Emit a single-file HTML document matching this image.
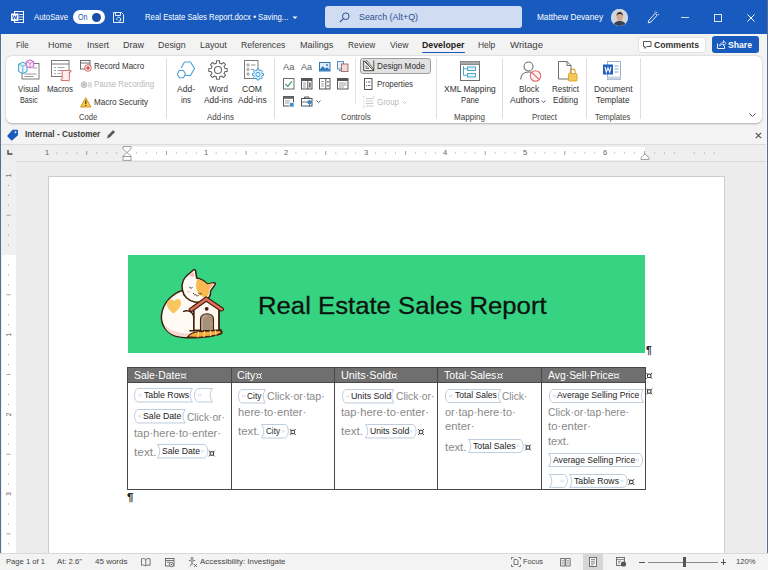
<!DOCTYPE html>
<html><head><meta charset="utf-8">
<style>
*{box-sizing:border-box;margin:0;padding:0}
html,body{width:768px;height:570px;overflow:hidden;background:#ececec;font-family:"Liberation Sans",sans-serif;font-size:9px;color:#222}
.abs{position:absolute}
.tx{position:absolute;white-space:nowrap;transform-origin:0 50%;display:block}
svg{overflow:visible}
</style></head><body>
<div class="abs" style="left:0px;top:33.5px;width:768px;height:111.5px;background:#f3f3f3"></div>
<div class="abs" style="left:0px;top:0px;width:768px;height:33.6px;background:#185abd"></div>
<div class="abs" style="left:6px;top:56px;width:756px;height:67px;background:#fff;border-radius:6px;box-shadow:0 0.5px 2px rgba(0,0,0,.28)"></div>
<div class="abs" style="left:0px;top:144px;width:768px;height:1px;background:#dcdcdc"></div>
<div class="abs" style="left:0px;top:145px;width:768px;height:408px;background:#ececec"></div>
<svg class="abs" style="left:11px;top:11px" width="13" height="12" viewBox="0 0 13 12"><rect x="3.5" y="0.5" width="9" height="11" fill="none" stroke="#fff" stroke-width="1"/>
<path d="M8 3.5h4M8 6h4M8 8.5h4" stroke="#fff" stroke-width="0.8"/>
<rect x="0" y="2.5" width="7.5" height="7.5" fill="#fff"/>
<path d="M1.5 4.2l1 4 1.2-3.4 1.2 3.4 1-4" fill="none" stroke="#185abd" stroke-width="0.9"/></svg>
<span class="tx" style="left:34.00px;top:11.72px;font-size:9px;line-height:10.80px;color:#fff;transform:scaleX(0.8711);">AutoSave</span>
<div class="abs" style="left:73px;top:10px;width:32px;height:14px;background:#fff;border-radius:7px"></div>
<span class="tx" style="left:78.00px;top:12.01px;font-size:8.5px;line-height:10.20px;color:#185abd;transform:scaleX(0.8378);">On</span>
<div class="abs" style="left:92px;top:12.5px;width:9px;height:9.0px;background:#1c4fa3;border-radius:50%"></div>
<svg class="abs" style="left:113px;top:12px" width="11" height="11" viewBox="0 0 11 11"><path d="M0.5 0.5h8l2 2v8h-10z" fill="none" stroke="#fff" stroke-width="0.9"/>
<path d="M2.5 0.5v3h5v-3" fill="none" stroke="#fff" stroke-width="0.9"/>
<path d="M4 8.2a2 2 0 1 1 3 .5M7.5 7v2h-2" fill="none" stroke="#fff" stroke-width="0.8"/></svg>
<span class="tx" style="left:144.70px;top:11.72px;font-size:9px;line-height:10.80px;color:#fff;transform:scaleX(0.8646);">Real Estate Sales Report.docx • Saving...</span>
<svg class="abs" style="left:292px;top:15.5px" width="6" height="4" viewBox="0 0 6 4"><path d="M0.5 0.5l2.5 2.5 2.5-2.5z" fill="#fff"/></svg>
<div class="abs" style="left:325px;top:6px;width:197px;height:22px;background:#d0dcf1;border-radius:3px"></div>
<svg class="abs" style="left:339px;top:11.5px" width="11" height="11" viewBox="0 0 11 11"><circle cx="6.8" cy="4.2" r="3.3" fill="none" stroke="#2a4d8f" stroke-width="1"/><path d="M4.4 6.6L0.8 10.2" stroke="#2a4d8f" stroke-width="1.1"/></svg>
<span class="tx" style="left:359.00px;top:12.02px;font-size:9px;line-height:10.80px;color:#2b4f91;transform:scaleX(0.9871);">Search (Alt+Q)</span>
<span class="tx" style="left:537.00px;top:12.02px;font-size:9px;line-height:10.80px;color:#fff;transform:scaleX(0.9162);">Matthew Devaney</span>
<div class="abs" style="left:610.5px;top:9px;width:17.0px;height:17px;background:#d9dde3;border-radius:50%"></div>
<svg class="abs" style="left:610.5px;top:9px" width="17" height="17" viewBox="0 0 17 17"><defs><clipPath id="av"><circle cx="8.5" cy="8.5" r="8.5"/></clipPath></defs>
<g clip-path="url(#av)"><rect width="17" height="17" fill="#cfd5dd"/>
<ellipse cx="8.7" cy="16.5" rx="6.2" ry="4.6" fill="#39414e"/>
<ellipse cx="8.7" cy="8" rx="3.1" ry="3.9" fill="#d9a58a"/>
<path d="M5.4 7.2c0-3.2 1.6-4.3 3.4-4.3s3.3 1.2 3.2 4.2c-.6-1.6-1.4-2.2-3.3-2.2s-2.8.7-3.3 2.300z" fill="#3a2a22"/></g></svg>
<svg class="abs" style="left:646px;top:11px" width="13" height="13" viewBox="0 0 13 13"><path d="M3 9.200L9.200 2.300l2 1.800L5 11l-2.800 .900z" fill="none" stroke="#fff" stroke-width="0.9"/>
<path d="M8.300 1.300l1.200-1 M11 .800l-.6 1.200 M12 3.500l1.100-.4" stroke="#fff" stroke-width="0.8"/></svg>
<div class="abs" style="left:681px;top:16.5px;width:7.5px;height:1.0px;background:#fff;opacity:.8"></div>
<div class="abs" style="left:714px;top:14px;width:7.5px;height:7.5px;border:1px solid #fff;opacity:.85"></div>
<svg class="abs" style="left:747px;top:14px" width="8" height="8" viewBox="0 0 8 8"><path d="M0.5 0.5l7 7M7.500 0.500l-7 7" stroke="#fff" stroke-width="1"/></svg>
<span class="tx" style="left:16.00px;top:39.43px;font-size:9.5px;line-height:11.40px;color:#3b3b3b;transform:scaleX(0.8296);">File</span>
<span class="tx" style="left:47.70px;top:39.43px;font-size:9.5px;line-height:11.40px;color:#3b3b3b;transform:scaleX(0.9470);">Home</span>
<span class="tx" style="left:86.70px;top:39.43px;font-size:9.5px;line-height:11.40px;color:#3b3b3b;transform:scaleX(0.9259);">Insert</span>
<span class="tx" style="left:123.00px;top:39.43px;font-size:9.5px;line-height:11.40px;color:#3b3b3b;transform:scaleX(0.9473);">Draw</span>
<span class="tx" style="left:158.00px;top:39.43px;font-size:9.5px;line-height:11.40px;color:#3b3b3b;transform:scaleX(0.9367);">Design</span>
<span class="tx" style="left:200.00px;top:39.43px;font-size:9.5px;line-height:11.40px;color:#3b3b3b;transform:scaleX(0.9361);">Layout</span>
<span class="tx" style="left:241.00px;top:39.43px;font-size:9.5px;line-height:11.40px;color:#3b3b3b;transform:scaleX(0.9119);">References</span>
<span class="tx" style="left:299.70px;top:39.43px;font-size:9.5px;line-height:11.40px;color:#3b3b3b;transform:scaleX(0.9556);">Mailings</span>
<span class="tx" style="left:348.00px;top:39.43px;font-size:9.5px;line-height:11.40px;color:#3b3b3b;transform:scaleX(0.8764);">Review</span>
<span class="tx" style="left:389.70px;top:39.43px;font-size:9.5px;line-height:11.40px;color:#3b3b3b;transform:scaleX(0.8962);">View</span>
<span class="tx" style="left:477.70px;top:39.43px;font-size:9.5px;line-height:11.40px;color:#3b3b3b;transform:scaleX(0.8854);">Help</span>
<span class="tx" style="left:510.00px;top:39.43px;font-size:9.5px;line-height:11.40px;color:#3b3b3b;transform:scaleX(1.0135);">Writage</span>
<span class="tx" style="left:422.00px;top:39.43px;font-size:9.5px;line-height:11.40px;color:#222;font-weight:bold;transform:scaleX(0.9252);">Developer</span>
<div class="abs" style="left:422px;top:51.5px;width:43px;height:1.5px;background:#185abd;border-radius:1px"></div>
<div class="abs" style="left:638px;top:37px;width:67.5px;height:15.5px;background:#fff;border:1px solid #e2e2e2;border-radius:3px"></div>
<svg class="abs" style="left:643px;top:41px" width="8.5" height="8" viewBox="0 0 8.5 8"><path d="M0.500 0.500h7.500v5h-4.200l-2 1.900v-1.900h-1.300z" fill="none" stroke="#444" stroke-width="0.9"/></svg>
<span class="tx" style="left:654.00px;top:39.43px;font-size:9.5px;line-height:11.40px;color:#333;font-weight:bold;transform:scaleX(0.9166);">Comments</span>
<div class="abs" style="left:711.5px;top:36px;width:47.5px;height:17px;background:#185abd;border-radius:3px"></div>
<svg class="abs" style="left:716.5px;top:40px" width="9" height="9" viewBox="0 0 9 9"><path d="M0.500 3.500v5h7v-2.500" fill="none" stroke="#fff" stroke-width="0.9"/><path d="M2.500 6c.5-2.500 2-3.500 4-3.500v-2l2.300 2.800-2.300 2.700v-1.800c-1.500 0-2.800.3-4 1.800z" fill="none" stroke="#fff" stroke-width="0.8"/></svg>
<span class="tx" style="left:728.00px;top:39.43px;font-size:9.5px;line-height:11.40px;color:#fff;font-weight:bold;transform:scaleX(0.9090);">Share</span>
<svg class="abs" style="left:17.5px;top:60px" width="22" height="20" viewBox="0 0 22 20"><rect x="4" y="3.500" width="17" height="15.500" fill="#fff" stroke="#7a7a7a" stroke-width="1"/>
<path d="M6.500 14h12M6.500 16.500h9" stroke="#9a9a9a" stroke-width="1"/><path d="M14.500 8h4.500" stroke="#9a9a9a" stroke-width="1"/>
<path d="M0.600 4.200l4.200-2 4.200 2v7.300l-4.200 2-4.200-2z" fill="#eaf6fb" stroke="#3fa0c8" stroke-width="1"/><path d="M0.600 4.200l4.200 2 4.200-2M4.800 6.200v7.300" fill="none" stroke="#3fa0c8" stroke-width="0.800"/>
<path d="M8.300 1.600l3.700-1.800 3.700 1.800v4.600l-3.700 1.800-3.700-1.800z" fill="#fbeafa" stroke="#c75fc2" stroke-width="1"/><path d="M8.300 1.600l3.700 1.800 3.700-1.800M12 3.400v4.600" fill="none" stroke="#c75fc2" stroke-width="0.800"/></svg>
<span class="tx" style="left:18.00px;top:84.15px;font-size:9.3px;line-height:11.16px;color:#333;transform:scaleX(0.8505);">Visual</span>
<span class="tx" style="left:20.00px;top:95.15px;font-size:9.3px;line-height:11.16px;color:#333;transform:scaleX(0.7739);">Basic</span>
<svg class="abs" style="left:50.5px;top:60px" width="21" height="22" viewBox="0 0 21 22"><rect x="0.500" y="0.500" width="17.500" height="16" fill="#fff" stroke="#7a7a7a" stroke-width="1"/><path d="M0.500 4h17.500" stroke="#7a7a7a" stroke-width="1"/>
<path d="M3 7.500h2M6.500 7.500h7M3 10.500h2M6.500 10.500h5M3 13.500h2M6.500 13.500h3" stroke="#a5a5a5" stroke-width="1"/>
<path d="M10.500 10.500h9.500v1.500h-1.700v8.500c0 1-1.200 1-1.200 0h-6.600c-1 0-1-1.500 0-1.500h.700v-8.500z" fill="#fdeeee" stroke="#d9706f" stroke-width="1"/></svg>
<span class="tx" style="left:47.00px;top:84.15px;font-size:9.3px;line-height:11.16px;color:#333;transform:scaleX(0.8528);">Macros</span>
<svg class="abs" style="left:79.5px;top:60px" width="12" height="12" viewBox="0 0 12 12"><rect x="0.500" y="0.500" width="9.500" height="8.500" fill="#fff" stroke="#6e6e6e" stroke-width="1"/><path d="M0.500 3h9.500" stroke="#6e6e6e" stroke-width="1"/>
<circle cx="8" cy="8" r="3.300" fill="#fff" stroke="#c9504f" stroke-width="0.900"/><circle cx="8" cy="8" r="1.700" fill="#d34b4a"/></svg>
<span class="tx" style="left:93.80px;top:60.75px;font-size:9.3px;line-height:11.16px;color:#333;transform:scaleX(0.8595);">Record Macro</span>
<svg class="abs" style="left:79.5px;top:79.5px" width="12" height="10" viewBox="0 0 12 10"><circle cx="4" cy="4.700" r="3" fill="#d9d9d9" stroke="#bdbdbd" stroke-width="0.900"/><circle cx="4" cy="4.700" r="1.300" fill="#b5b5b5"/><path d="M9 2v5.500M11 2v5.500" stroke="#bdbdbd" stroke-width="1"/></svg>
<span class="tx" style="left:93.80px;top:78.75px;font-size:9.3px;line-height:11.16px;color:#b9b9b9;transform:scaleX(0.8410);">Pause Recording</span>
<svg class="abs" style="left:79.5px;top:96.5px" width="11.5" height="10.5" viewBox="0 0 11.5 10.5"><path d="M5.750 0.700l5.200 9.300h-10.400z" fill="#f7c948" stroke="#c58f1c" stroke-width="0.900" stroke-linejoin="round"/><path d="M5.750 3.600v3.300" stroke="#4a3a10" stroke-width="1.200"/><circle cx="5.750" cy="8.400" r="0.700" fill="#4a3a10"/></svg>
<span class="tx" style="left:94.00px;top:96.75px;font-size:9.3px;line-height:11.16px;color:#333;transform:scaleX(0.8707);">Macro Security</span>
<span class="tx" style="left:78.80px;top:112.40px;font-size:8.7px;line-height:10.44px;color:#444;transform:scaleX(0.8750);">Code</span>
<div class="abs" style="left:165.5px;top:58px;width:1.0px;height:61px;background:#dedede"></div>
<svg class="abs" style="left:176px;top:60.5px" width="21" height="20" viewBox="0 0 21 20"><path d="M8.500 1l6-0 4 6.500-4 7h-6l-1.500-2.800" fill="none" stroke="#4d9fd6" stroke-width="1.100" stroke-linejoin="round"/><path d="M8.500 1l-3.300 6" stroke="#4d9fd6" stroke-width="1.100"/>
<path d="M3.300 9.500h4.200l2 3.600-2 3.600h-4.200l-2-3.600z" fill="#fff" stroke="#4d9fd6" stroke-width="1.100" stroke-linejoin="round"/></svg>
<span class="tx" style="left:177.00px;top:84.15px;font-size:9.3px;line-height:11.16px;color:#333;transform:scaleX(0.9162);">Add-</span>
<span class="tx" style="left:181.00px;top:95.15px;font-size:9.3px;line-height:11.16px;color:#333;transform:scaleX(0.8411);">ins</span>
<svg class="abs" style="left:208px;top:60px" width="20" height="20" viewBox="0 0 20 20"><path d="M19.18 8.52 L19.18 11.48 L16.88 11.61 L16.01 13.73 L17.54 15.44 L15.44 17.54 L13.73 16.01 L11.61 16.88 L11.48 19.18 L8.52 19.18 L8.39 16.88 L6.27 16.01 L4.56 17.54 L2.46 15.44 L3.99 13.73 L3.12 11.61 L0.82 11.48 L0.82 8.52 L3.12 8.39 L3.99 6.27 L2.46 4.56 L4.56 2.46 L6.27 3.99 L8.39 3.12 L8.52 0.82 L11.48 0.82 L11.61 3.12 L13.73 3.99 L15.44 2.46 L17.54 4.56 L16.01 6.27 L16.88 8.39z" fill="none" stroke="#6a6a6a" stroke-width="1.1" stroke-linejoin="round"/><circle cx="10" cy="10" r="3.53" fill="none" stroke="#6a6a6a" stroke-width="1.1"/></svg>
<span class="tx" style="left:209.00px;top:84.15px;font-size:9.3px;line-height:11.16px;color:#333;transform:scaleX(0.8616);">Word</span>
<span class="tx" style="left:204.00px;top:95.15px;font-size:9.3px;line-height:11.16px;color:#333;transform:scaleX(0.9069);">Add-ins</span>
<svg class="abs" style="left:244px;top:60px" width="20" height="21" viewBox="0 0 20 21"><rect x="0.500" y="0.500" width="13.500" height="18" fill="#fff" stroke="#7a7a7a" stroke-width="1"/>
<path d="M3 4h2v2h-2zM3 8.500h2v2h-2zM3 13h2v2h-2z" fill="none" stroke="#8a8a8a" stroke-width="0.800"/><path d="M7 5h4.500M7 9.500h3" stroke="#8a8a8a" stroke-width="0.900"/><path d="M19.53 13.61 L19.53 15.39 L18.14 15.47 L17.62 16.74 L18.54 17.78 L17.28 19.04 L16.24 18.12 L14.97 18.64 L14.89 20.03 L13.11 20.03 L13.03 18.64 L11.76 18.12 L10.72 19.04 L9.46 17.78 L10.38 16.74 L9.86 15.47 L8.47 15.39 L8.47 13.61 L9.86 13.53 L10.38 12.26 L9.46 11.22 L10.72 9.96 L11.76 10.88 L13.03 10.36 L13.11 8.97 L14.89 8.97 L14.97 10.36 L16.24 10.88 L17.28 9.96 L18.54 11.22 L17.62 12.26 L18.14 13.53z" fill="#eaf5fc" stroke="#3f9bd8" stroke-width="1" stroke-linejoin="round"/><circle cx="14" cy="14.5" r="2.13" fill="#eaf5fc" stroke="#3f9bd8" stroke-width="1"/></svg>
<span class="tx" style="left:242.00px;top:84.15px;font-size:9.3px;line-height:11.16px;color:#333;transform:scaleX(0.9218);">COM</span>
<span class="tx" style="left:238.00px;top:95.15px;font-size:9.3px;line-height:11.16px;color:#333;transform:scaleX(0.9101);">Add-ins</span>
<span class="tx" style="left:206.50px;top:112.40px;font-size:8.7px;line-height:10.44px;color:#444;transform:scaleX(0.9153);">Add-ins</span>
<div class="abs" style="left:274px;top:58px;width:1px;height:61px;background:#dedede"></div>
<span class="tx" style="left:283.00px;top:60.67px;font-size:9.6px;line-height:11.52px;color:#5c5c5c;transform:scaleX(0.9708);">Aa</span>
<span class="tx" style="left:301.00px;top:60.67px;font-size:9.6px;line-height:11.52px;color:#5c5c5c;transform:scaleX(0.9367);">Aa</span>
<svg class="abs" style="left:319px;top:62px" width="11.5" height="9.5" viewBox="0 0 11.5 9.5"><rect x="0.500" y="0.500" width="10.500" height="8.500" fill="#dcecf9" stroke="#2f78b7" stroke-width="1"/><path d="M0.800 7.500l3-3.200 2.500 2.500 1.700-1.500 2.700 2.400v1h-9.900z" fill="#2f78b7"/><circle cx="8" cy="3" r="0.900" fill="#2f78b7"/></svg>
<svg class="abs" style="left:337px;top:61px" width="11.5" height="11" viewBox="0 0 11.5 11"><rect x="0.500" y="0.500" width="6" height="7.500" fill="#e8f0f8" stroke="#4f86b8" stroke-width="0.900"/><rect x="4.500" y="3" width="6.500" height="7.500" fill="#f5d9d4" stroke="#9a6b66" stroke-width="0.900"/><path d="M2 9.500h2M3 8.500v2" stroke="#4f86b8" stroke-width="0.800"/></svg>
<svg class="abs" style="left:283px;top:78px" width="11.5" height="11.5" viewBox="0 0 11.5 11.5"><rect x="0.500" y="0.500" width="10.500" height="10.500" fill="#fff" stroke="#6b6b6b" stroke-width="1"/><path d="M2.500 6l2.300 2.300 4.200-5" fill="none" stroke="#3d9a63" stroke-width="1.200"/></svg>
<svg class="abs" style="left:301px;top:78px" width="11.5" height="11.5" viewBox="0 0 11.5 11.5"><rect x="0.500" y="0.500" width="10.500" height="10.500" fill="#fff" stroke="#555" stroke-width="1"/><rect x="0.500" y="0.500" width="10.500" height="2.500" fill="#555"/><path d="M6.800 3v8" stroke="#555" stroke-width="1"/><path d="M2 5h3M2 7h3M2 9h3" stroke="#888" stroke-width="0.800"/><rect x="8" y="4.500" width="1.800" height="5" fill="#777"/></svg>
<svg class="abs" style="left:319px;top:78px" width="11.5" height="11.5" viewBox="0 0 11.5 11.5"><rect x="0.500" y="0.500" width="10.500" height="10.500" fill="#fff" stroke="#555" stroke-width="1"/><path d="M6.800 0.500v10.500" stroke="#555" stroke-width="1"/><path d="M2 3.500h3M2 5.800h3M2 8h3" stroke="#888" stroke-width="0.800"/><rect x="8.200" y="3" width="1.500" height="1.500" fill="#666"/><rect x="8.200" y="7" width="1.500" height="1.500" fill="#666"/></svg>
<svg class="abs" style="left:337px;top:78px" width="11.5" height="11.5" viewBox="0 0 11.5 11.5"><rect x="0.500" y="0.500" width="10.500" height="10.500" fill="#fff" stroke="#555" stroke-width="1"/><rect x="0.500" y="0.500" width="10.500" height="2.500" fill="#555"/><path d="M2 5h7.500M2 7h7.500M2 9h5" stroke="#888" stroke-width="0.800"/></svg>
<svg class="abs" style="left:283px;top:96px" width="11.5" height="11.5" viewBox="0 0 11.5 11.5"><rect x="0.500" y="0.500" width="10" height="9.500" fill="#fff" stroke="#555" stroke-width="1"/><rect x="0.500" y="0.500" width="10" height="2.300" fill="#666"/><path d="M2 5h5M2 7h4" stroke="#888" stroke-width="0.800"/><rect x="6.500" y="6.500" width="4.500" height="4.500" fill="#3a8fd0" stroke="#fff" stroke-width="0.600"/></svg>
<svg class="abs" style="left:301px;top:96px" width="11.5" height="11.5" viewBox="0 0 11.5 11.5"><rect x="0.500" y="2.500" width="10.500" height="7.500" fill="#fff" stroke="#555" stroke-width="1"/><path d="M3.500 2.500v-1.500h4.500v1.500" fill="none" stroke="#555" stroke-width="1"/><path d="M0.500 6h10.500" stroke="#555" stroke-width="0.800"/><path d="M8.500 4.500a1.700 1.700 0 1 0 .010 0zM8.500 7.500v3.500" fill="#3a8fd0" stroke="#2e7fc0" stroke-width="1"/></svg>
<svg class="abs" style="left:316px;top:100px" width="5" height="3.5" viewBox="0 0 5 3.5"><path d="M0.500 0.500l2 2 2-2" fill="none" stroke="#555" stroke-width="0.900"/></svg>
<div class="abs" style="left:355px;top:58px;width:1px;height:46px;background:#e3e3e3"></div>
<div class="abs" style="left:360px;top:58px;width:71px;height:15.5px;background:#e2e2e2;border:1px solid #9d9d9d;border-radius:3px"></div>
<svg class="abs" style="left:362.5px;top:60px" width="11.5" height="11.5" viewBox="0 0 11.5 11.5"><path d="M0.700 0.700v10h10z" fill="#fff" stroke="#444" stroke-width="1" stroke-linejoin="round"/><path d="M3 5.500v3h3z" fill="none" stroke="#444" stroke-width="0.700"/><path d="M2.500 1.300l6.800 8.300 1.300.7-.2-1.500-6.700-8.300z" fill="#fff" stroke="#444" stroke-width="0.800"/><path d="M10.800 0.500v10" stroke="#444" stroke-width="0.900"/></svg>
<span class="tx" style="left:377.00px;top:60.75px;font-size:9.3px;line-height:11.16px;color:#2d2d2d;transform:scaleX(0.8759);">Design Mode</span>
<svg class="abs" style="left:364px;top:78px" width="8.5" height="12" viewBox="0 0 8.5 12"><rect x="0.500" y="0.500" width="7.500" height="11" fill="#fff" stroke="#555" stroke-width="1"/><path d="M2 4h1M4 4h2.500M2 7.500h1M4 7.500h2.500" stroke="#666" stroke-width="0.900"/></svg>
<span class="tx" style="left:377.00px;top:78.95px;font-size:9.3px;line-height:11.16px;color:#333;transform:scaleX(0.8493);">Properties</span>
<svg class="abs" style="left:362.5px;top:96px" width="11.5" height="12" viewBox="0 0 11.5 12"><path d="M3 2.500h7.500M3 5h7.500M3 7.500h7.500M3 10h7.500" stroke="#c4c4c4" stroke-width="0.900"/><path d="M0.500 0.500h1M0.500 0.500v1M0.500 11.500h1M0.500 11.500v-1M10 0.500h1M11 0.500v1" stroke="#c4c4c4" stroke-width="0.800"/><path d="M1 3v7" stroke="#d0d0d0" stroke-width="0.800" stroke-dasharray="1 1"/></svg>
<span class="tx" style="left:377.00px;top:96.75px;font-size:9.3px;line-height:11.16px;color:#b9b9b9;transform:scaleX(0.8511);">Group</span>
<svg class="abs" style="left:401.5px;top:100.5px" width="5" height="3.5" viewBox="0 0 5 3.5"><path d="M0.500 0.500l2 2 2-2" fill="none" stroke="#c0c0c0" stroke-width="0.900"/></svg>
<span class="tx" style="left:341.00px;top:112.40px;font-size:8.7px;line-height:10.44px;color:#444;transform:scaleX(0.9168);">Controls</span>
<div class="abs" style="left:436px;top:58px;width:1px;height:61px;background:#dedede"></div>
<svg class="abs" style="left:460px;top:60.5px" width="20" height="20" viewBox="0 0 20 20"><rect x="0.500" y="0.500" width="19" height="19" fill="#fff" stroke="#6e6e6e" stroke-width="1"/><path d="M0.500 3.500h19" stroke="#6e6e6e" stroke-width="1"/><rect x="0.500" y="0.500" width="19" height="3" fill="#a8a8a8"/>
<rect x="7.500" y="6" width="8" height="3.500" fill="#e3f3fa" stroke="#3c9fcb" stroke-width="0.900"/><rect x="7.500" y="12.500" width="8" height="3.500" fill="#e3f3fa" stroke="#3c9fcb" stroke-width="0.900"/><path d="M3.500 5v9.300h4M3.500 7.800h4" fill="none" stroke="#3c9fcb" stroke-width="0.900"/></svg>
<span class="tx" style="left:443.70px;top:84.35px;font-size:9.3px;line-height:11.16px;color:#333;transform:scaleX(0.9082);">XML Mapping</span>
<span class="tx" style="left:461.00px;top:95.35px;font-size:9.3px;line-height:11.16px;color:#333;transform:scaleX(0.8287);">Pane</span>
<span class="tx" style="left:454.00px;top:112.40px;font-size:8.7px;line-height:10.44px;color:#444;transform:scaleX(0.9289);">Mapping</span>
<div class="abs" style="left:502px;top:58px;width:1px;height:61px;background:#dedede"></div>
<svg class="abs" style="left:519.5px;top:60.5px" width="22" height="21.5" viewBox="0 0 22 21.5"><circle cx="8.500" cy="5.500" r="4.500" fill="#fff" stroke="#6e6e6e" stroke-width="1.100"/><path d="M0.700 18.500c0-5 3.500-7.500 7.800-7.500 2 0 3.500.5 4.500 1.300" fill="none" stroke="#6e6e6e" stroke-width="1.100"/>
<circle cx="15.500" cy="15" r="5.300" fill="#fdf1f1" stroke="#dc6b6b" stroke-width="1.100"/><path d="M11.800 11.300l7.400 7.400" stroke="#dc6b6b" stroke-width="1.100"/></svg>
<span class="tx" style="left:518.50px;top:84.35px;font-size:9.3px;line-height:11.16px;color:#333;transform:scaleX(0.8794);">Block</span>
<span class="tx" style="left:510.00px;top:95.35px;font-size:9.3px;line-height:11.16px;color:#333;transform:scaleX(0.9204);">Authors</span>
<svg class="abs" style="left:541px;top:99.5px" width="5" height="3.5" viewBox="0 0 5 3.5"><path d="M0.500 0.500l2 2 2-2" fill="none" stroke="#555" stroke-width="0.900"/></svg>
<svg class="abs" style="left:558px;top:60.5px" width="20" height="21.5" viewBox="0 0 20 21.5"><path d="M0.500 0.500h8.500l4 4v13.500h-12.500z" fill="#fff" stroke="#6e6e6e" stroke-width="1" stroke-linejoin="round"/><path d="M9 0.500v4h4" fill="none" stroke="#6e6e6e" stroke-width="1"/>
<rect x="10.500" y="12.500" width="8.500" height="7.500" rx="0.800" fill="#f6c85a" stroke="#d7a12b" stroke-width="0.900"/><path d="M12.300 12.500v-2a2.400 2.400 0 0 1 4.800 0v2" fill="none" stroke="#d7a12b" stroke-width="1.100"/></svg>
<span class="tx" style="left:551.70px;top:84.35px;font-size:9.3px;line-height:11.16px;color:#333;transform:scaleX(0.8566);">Restrict</span>
<span class="tx" style="left:553.00px;top:95.35px;font-size:9.3px;line-height:11.16px;color:#333;transform:scaleX(0.8791);">Editing</span>
<span class="tx" style="left:532.00px;top:112.40px;font-size:8.7px;line-height:10.44px;color:#444;transform:scaleX(0.9070);">Protect</span>
<div class="abs" style="left:585.5px;top:58px;width:1.0px;height:61px;background:#dedede"></div>
<svg class="abs" style="left:602.5px;top:61px" width="18.5" height="19.5" viewBox="0 0 18.5 19.5"><rect x="4.500" y="0.500" width="13" height="18" fill="#fff" stroke="#9ab0cf" stroke-width="1"/><rect x="4.500" y="15.500" width="13" height="3" fill="#c9d3e2"/><path d="M11.500 5h4M11.500 8h4M11.500 11h4" stroke="#8aa5cc" stroke-width="1"/>
<rect x="0" y="3.500" width="10" height="10" fill="#1f5fbf"/><path d="M2 5.800l1.300 5.400 1.700-4.400 1.700 4.400 1.300-5.400" fill="none" stroke="#fff" stroke-width="1.100"/></svg>
<span class="tx" style="left:593.50px;top:84.15px;font-size:9.3px;line-height:11.16px;color:#333;transform:scaleX(0.9083);">Document</span>
<span class="tx" style="left:596.00px;top:95.15px;font-size:9.3px;line-height:11.16px;color:#333;transform:scaleX(0.8877);">Template</span>
<span class="tx" style="left:595.00px;top:112.20px;font-size:8.7px;line-height:10.44px;color:#444;transform:scaleX(0.8928);">Templates</span>
<div class="abs" style="left:639.5px;top:58px;width:1.0px;height:61px;background:#dedede"></div>
<svg class="abs" style="left:748.5px;top:112.5px" width="7" height="4.5" viewBox="0 0 7 4.5"><path d="M0.500 0.500l3 3 3-3" fill="none" stroke="#555" stroke-width="1"/></svg>
<svg class="abs" style="left:7px;top:128.5px" width="11.5" height="11.5" viewBox="0 0 11.5 11.5"><path d="M5.500 0.700h4.800a.7.700 0 0 1 .7.700v4.800l-5.700 5a.8.800 0 0 1-1.100 0l-3.700-3.700a.8.800 0 0 1 0-1.100z" fill="#185abd"/><circle cx="8.500" cy="3.200" r="1" fill="#f3f3f3"/></svg>
<span class="tx" style="left:24.70px;top:129.34px;font-size:8.8px;line-height:10.56px;color:#3a3a3a;font-weight:bold;transform:scaleX(0.9333);">Internal - Customer</span>
<svg class="abs" style="left:107px;top:130px" width="8" height="8.5" viewBox="0 0 8 8.5"><path d="M0.500 8l.6-2.500 5-5 1.600 1.600-5 5zM5.300 1.300l1.600 1.600" fill="#555" stroke="#555" stroke-width="0.600"/></svg>
<svg class="abs" style="left:755px;top:131.5px" width="7" height="7" viewBox="0 0 7 7"><path d="M0.800 0.800l5.400 5.400M6.200 0.800l-5.400 5.400" stroke="#555" stroke-width="1.200"/></svg>
<div class="abs" style="left:0px;top:145px;width:768px;height:16px;background:#eeeeee"></div>
<div class="abs" style="left:17px;top:146.5px;width:701px;height:13.5px;background:#efefef"></div>
<div class="abs" style="left:127px;top:146.5px;width:518px;height:13.5px;background:#fff"></div>
<div class="abs" style="left:0px;top:160.5px;width:768px;height:0.8000000000000114px;background:#dadada"></div>
<svg class="abs" style="left:6.5px;top:150px" width="6" height="5" viewBox="0 0 6 5"><path d="M1 0v4h4.500" fill="none" stroke="#444" stroke-width="1.300"/></svg>
<span class="tx" style="left:44.92px;top:149.39px;font-size:6.5px;line-height:7.80px;color:#666;transform:scaleX(1.1618);">1</span>
<span class="tx" style="left:204.28px;top:149.39px;font-size:6.5px;line-height:7.80px;color:#666;transform:scaleX(1.1618);">1</span>
<span class="tx" style="left:283.96px;top:149.39px;font-size:6.5px;line-height:7.80px;color:#666;transform:scaleX(1.1618);">2</span>
<span class="tx" style="left:363.64px;top:149.39px;font-size:6.5px;line-height:7.80px;color:#666;transform:scaleX(1.1618);">3</span>
<span class="tx" style="left:443.32px;top:149.39px;font-size:6.5px;line-height:7.80px;color:#666;transform:scaleX(1.1618);">4</span>
<span class="tx" style="left:523.00px;top:149.39px;font-size:6.5px;line-height:7.80px;color:#666;transform:scaleX(1.1618);">5</span>
<span class="tx" style="left:602.68px;top:149.39px;font-size:6.5px;line-height:7.80px;color:#666;transform:scaleX(1.1618);">6</span>
<svg class="abs" style="left:0px;top:0px" width="768" height="170" viewBox="0 0 768 170"><rect x="56.4" y="152.500" width="1" height="1" fill="#9a9a9a"/><rect x="66.3" y="152.500" width="1" height="1" fill="#9a9a9a"/><rect x="76.3" y="152.500" width="1" height="1" fill="#9a9a9a"/><rect x="86.4" y="151" width="0.800" height="4" fill="#8c8c8c"/><rect x="96.2" y="152.500" width="1" height="1" fill="#9a9a9a"/><rect x="106.2" y="152.500" width="1" height="1" fill="#9a9a9a"/><rect x="116.1" y="152.500" width="1" height="1" fill="#9a9a9a"/><rect x="136.1" y="152.500" width="1" height="1" fill="#9a9a9a"/><rect x="146.0" y="152.500" width="1" height="1" fill="#9a9a9a"/><rect x="156.0" y="152.500" width="1" height="1" fill="#9a9a9a"/><rect x="166.0" y="151" width="0.800" height="4" fill="#8c8c8c"/><rect x="175.9" y="152.500" width="1" height="1" fill="#9a9a9a"/><rect x="185.9" y="152.500" width="1" height="1" fill="#9a9a9a"/><rect x="195.8" y="152.500" width="1" height="1" fill="#9a9a9a"/><rect x="215.7" y="152.500" width="1" height="1" fill="#9a9a9a"/><rect x="225.7" y="152.500" width="1" height="1" fill="#9a9a9a"/><rect x="235.7" y="152.500" width="1" height="1" fill="#9a9a9a"/><rect x="245.7" y="151" width="0.800" height="4" fill="#8c8c8c"/><rect x="255.6" y="152.500" width="1" height="1" fill="#9a9a9a"/><rect x="265.5" y="152.500" width="1" height="1" fill="#9a9a9a"/><rect x="275.5" y="152.500" width="1" height="1" fill="#9a9a9a"/><rect x="295.4" y="152.500" width="1" height="1" fill="#9a9a9a"/><rect x="305.4" y="152.500" width="1" height="1" fill="#9a9a9a"/><rect x="315.3" y="152.500" width="1" height="1" fill="#9a9a9a"/><rect x="325.4" y="151" width="0.800" height="4" fill="#8c8c8c"/><rect x="335.3" y="152.500" width="1" height="1" fill="#9a9a9a"/><rect x="345.2" y="152.500" width="1" height="1" fill="#9a9a9a"/><rect x="355.2" y="152.500" width="1" height="1" fill="#9a9a9a"/><rect x="375.1" y="152.500" width="1" height="1" fill="#9a9a9a"/><rect x="385.1" y="152.500" width="1" height="1" fill="#9a9a9a"/><rect x="395.0" y="152.500" width="1" height="1" fill="#9a9a9a"/><rect x="405.1" y="151" width="0.800" height="4" fill="#8c8c8c"/><rect x="414.9" y="152.500" width="1" height="1" fill="#9a9a9a"/><rect x="424.9" y="152.500" width="1" height="1" fill="#9a9a9a"/><rect x="434.9" y="152.500" width="1" height="1" fill="#9a9a9a"/><rect x="454.8" y="152.500" width="1" height="1" fill="#9a9a9a"/><rect x="464.7" y="152.500" width="1" height="1" fill="#9a9a9a"/><rect x="474.7" y="152.500" width="1" height="1" fill="#9a9a9a"/><rect x="484.8" y="151" width="0.800" height="4" fill="#8c8c8c"/><rect x="494.6" y="152.500" width="1" height="1" fill="#9a9a9a"/><rect x="504.6" y="152.500" width="1" height="1" fill="#9a9a9a"/><rect x="514.5" y="152.500" width="1" height="1" fill="#9a9a9a"/><rect x="534.5" y="152.500" width="1" height="1" fill="#9a9a9a"/><rect x="544.4" y="152.500" width="1" height="1" fill="#9a9a9a"/><rect x="554.4" y="152.500" width="1" height="1" fill="#9a9a9a"/><rect x="564.4" y="151" width="0.800" height="4" fill="#8c8c8c"/><rect x="574.3" y="152.500" width="1" height="1" fill="#9a9a9a"/><rect x="584.3" y="152.500" width="1" height="1" fill="#9a9a9a"/><rect x="594.2" y="152.500" width="1" height="1" fill="#9a9a9a"/><rect x="614.1" y="152.500" width="1" height="1" fill="#9a9a9a"/><rect x="624.1" y="152.500" width="1" height="1" fill="#9a9a9a"/><rect x="634.1" y="152.500" width="1" height="1" fill="#9a9a9a"/><rect x="644.1" y="151" width="0.800" height="4" fill="#8c8c8c"/><rect x="654.0" y="152.500" width="1" height="1" fill="#9a9a9a"/><rect x="663.9" y="152.500" width="1" height="1" fill="#9a9a9a"/><rect x="673.9" y="152.500" width="1" height="1" fill="#9a9a9a"/><rect x="693.8" y="152.500" width="1" height="1" fill="#9a9a9a"/><rect x="703.8" y="152.500" width="1" height="1" fill="#9a9a9a"/><rect x="713.7" y="152.500" width="1" height="1" fill="#9a9a9a"/></svg>
<svg class="abs" style="left:122px;top:146px" width="10" height="15" viewBox="0 0 10 15"><path d="M1 0.500h8v2.500l-4 3.500-4-3.500z" fill="#fff" stroke="#8a8a8a" stroke-width="0.800"/><path d="M1 10l4-3.500 4 3.500v0.500h-8z" fill="#fff" stroke="#8a8a8a" stroke-width="0.800"/><rect x="1" y="10.500" width="8" height="3.800" fill="#fff" stroke="#8a8a8a" stroke-width="0.800"/></svg>
<svg class="abs" style="left:640px;top:153px" width="10" height="7" viewBox="0 0 10 7"><path d="M1 6.500v-2l4-3.500 4 3.500v2z" fill="#fff" stroke="#8a8a8a" stroke-width="0.800"/></svg>
<div class="abs" style="left:2px;top:161px;width:13.5px;height:392px;background:#f0f0f0"></div>
<div class="abs" style="left:2px;top:255px;width:13.5px;height:298px;background:#fff"></div>
<svg class="abs" style="left:0px;top:0px" width="20" height="570" viewBox="0 0 20 570"><text x="8.700" y="177.51999999999998" font-size="6.500" fill="#555" text-anchor="middle" font-family="Liberation Sans" transform="rotate(-90 8.700 175.32)">1</text><rect x="8" y="184.8" width="1" height="1" fill="#9a9a9a"/><rect x="8" y="194.7" width="1" height="1" fill="#9a9a9a"/><rect x="8" y="204.7" width="1" height="1" fill="#9a9a9a"/><rect x="6.500" y="214.8" width="4" height="0.800" fill="#8c8c8c"/><rect x="8" y="224.6" width="1" height="1" fill="#9a9a9a"/><rect x="8" y="234.6" width="1" height="1" fill="#9a9a9a"/><rect x="8" y="244.5" width="1" height="1" fill="#9a9a9a"/><rect x="8" y="264.5" width="1" height="1" fill="#9a9a9a"/><rect x="8" y="274.4" width="1" height="1" fill="#9a9a9a"/><rect x="8" y="284.4" width="1" height="1" fill="#9a9a9a"/><rect x="6.500" y="294.4" width="4" height="0.800" fill="#8c8c8c"/><rect x="8" y="304.3" width="1" height="1" fill="#9a9a9a"/><rect x="8" y="314.3" width="1" height="1" fill="#9a9a9a"/><rect x="8" y="324.2" width="1" height="1" fill="#9a9a9a"/><text x="8.700" y="336.88" font-size="6.500" fill="#555" text-anchor="middle" font-family="Liberation Sans" transform="rotate(-90 8.700 334.68)">1</text><rect x="8" y="344.1" width="1" height="1" fill="#9a9a9a"/><rect x="8" y="354.1" width="1" height="1" fill="#9a9a9a"/><rect x="8" y="364.1" width="1" height="1" fill="#9a9a9a"/><rect x="6.500" y="374.1" width="4" height="0.800" fill="#8c8c8c"/><rect x="8" y="384.0" width="1" height="1" fill="#9a9a9a"/><rect x="8" y="393.9" width="1" height="1" fill="#9a9a9a"/><rect x="8" y="403.9" width="1" height="1" fill="#9a9a9a"/><text x="8.700" y="416.56" font-size="6.500" fill="#555" text-anchor="middle" font-family="Liberation Sans" transform="rotate(-90 8.700 414.36)">2</text><rect x="8" y="423.8" width="1" height="1" fill="#9a9a9a"/><rect x="8" y="433.8" width="1" height="1" fill="#9a9a9a"/><rect x="8" y="443.7" width="1" height="1" fill="#9a9a9a"/><rect x="6.500" y="453.8" width="4" height="0.800" fill="#8c8c8c"/><rect x="8" y="463.7" width="1" height="1" fill="#9a9a9a"/><rect x="8" y="473.6" width="1" height="1" fill="#9a9a9a"/><rect x="8" y="483.6" width="1" height="1" fill="#9a9a9a"/><text x="8.700" y="496.24" font-size="6.500" fill="#555" text-anchor="middle" font-family="Liberation Sans" transform="rotate(-90 8.700 494.04)">3</text><rect x="8" y="503.5" width="1" height="1" fill="#9a9a9a"/><rect x="8" y="513.5" width="1" height="1" fill="#9a9a9a"/><rect x="8" y="523.4" width="1" height="1" fill="#9a9a9a"/><rect x="6.500" y="533.5" width="4" height="0.800" fill="#8c8c8c"/><rect x="8" y="543.3" width="1" height="1" fill="#9a9a9a"/></svg>
<div class="abs" style="left:0px;top:34px;width:1px;height:536px;background:#5a6e8f"></div>
<div class="abs" style="left:766px;top:34px;width:1px;height:536px;background:#f4f7fb"></div>
<div class="abs" style="left:767px;top:0px;width:1px;height:570px;background:#5c6d8a"></div>
<div class="abs" style="left:48px;top:175.5px;width:676.8px;height:377.5px;background:#fff;border:1px solid #cdcdcd;border-bottom:none"></div>
<div class="abs" style="left:127.5px;top:255px;width:517.5px;height:97.5px;background:#36d383"></div>
<span class="tx" style="left:258.00px;top:291.47px;font-size:24.6px;line-height:29.52px;color:#0c130f;transform:scaleX(1.0452);-webkit-text-stroke:0.3px #0c130f;">Real Estate Sales Report</span>
<span class="tx" style="left:646.30px;top:345.13px;font-size:10px;line-height:12.00px;color:#222;font-weight:bold;transform:scaleX(1.0249);">¶</span>
<svg class="abs" style="left:0px;top:0px" width="768" height="570" viewBox="0 0 768 570">
<g stroke-linejoin="round" stroke-linecap="round">
<!-- tail -->
<path d="M186 337.300c12 1.200 27 -.5 35.500-3.700c1.500-1.800-.3-4.300-2.500-4.300l-30 1.500z" fill="#f7a93b" stroke="#40200f" stroke-width="1.400"/>
<path d="M198 331l-1 6M204 330.800l-.6 6M210 330.300l0 5.500M215.500 329.800l.5 5" stroke="#fbd58a" stroke-width="1.400"/>
<!-- body -->
<path d="M182.500 290.500c-9 2.500-19.500 11.500-21 24.500c-1 10 5.500 19.500 17 21.800c8 1.400 17 .8 22-1.800l0-30z" fill="#fffaf4" stroke="#40200f" stroke-width="1.500"/>
<path d="M163.500 323c1.500 8 8 12.500 16 13.300c7 .6 14 .2 20.500-1.500l0-3c-10 2.500-29 3-36.500-8.800z" fill="#f5d9d2" stroke="none"/>
<!-- heart patch -->
<path d="M173.500 313.500c-4.500-3-7.800-7.500-6.300-11.500c1.300-3.300 5.300-3.300 7 -.6c1.500-3.200 6.300-3.200 6.800.8c.5 4-3.500 8.300-7.500 11.300z" fill="#f8c65f" stroke="none"/>
<!-- head -->
<path d="M186.800 275.800l6.800-6c.8-.6 1.700-.2 1.800.7l1.300 7.500c4 .8 8 3 10.500 6l7-1.200c1-.1 1.500.8 1 1.600l-4.600 6.600c.3 4.500-2.300 8.500-7.200 10.300c-5 1.800-12.500 1-17-3.500c-4.300-4.300-5.600-12-3-17.500c.8-1.800 2-3.300 3.400-4.500z" fill="#fffaf4" stroke="#40200f" stroke-width="1.500"/>
<path d="M197.500 279c3.500.8 7.500 2.700 9.700 5.300l6.500-1.200-4.600 6.800c.2 3-1 6-3.500 8c-4.500-1.300-8.500-5-9.300-10c-.5-3.200-.2-6.500 1.200-8.900z" fill="#f9b950" stroke="none"/>
<path d="M189.300 275.500l4-3.600 .9 5z" fill="#f5b3b0" stroke="none"/>
<path d="M209 285.500l3.800-.7-2.500 3.700z" fill="#f5b3b0" stroke="none"/>
<path d="M189.500 287.300c.8 1 2 1.200 2.800.3" fill="none" stroke="#40200f" stroke-width="0.900"/>
<path d="M198.700 293.500c1 .9 2.200.8 3-.2" fill="none" stroke="#40200f" stroke-width="0.900"/>
<path d="M193.300 293.300c.3 1.500 1.600 2 2.500 1.200c.2 1.300 1.500 1.900 2.600 1.100" fill="none" stroke="#40200f" stroke-width="0.800"/>
<ellipse cx="188.800" cy="291.800" rx="1.800" ry="1.100" fill="#fbd3d3"/>
<!-- house -->
<path d="M193.700 306v24.500h25.300v-24.500l-12.800-7.500z" fill="#fff8ee" stroke="#40200f" stroke-width="1.400"/>

<path d="M193.700 306v24.500h25.300v-24.500" fill="none" stroke="#40200f" stroke-width="1.400"/>
<path d="M200.500 330.500v-11c0-3.500 2.700-5.800 6.500-5.800s6.500 2.300 6.500 5.800v11z" fill="#a8917b" stroke="#40200f" stroke-width="1.100"/>
<path d="M202.300 330.500v-10.500c0-2.500 2-4.300 4.700-4.300" fill="none" stroke="#c7b39e" stroke-width="1"/>
<circle cx="211.200" cy="323.500" r="0.600" fill="#f3c24a"/>
<circle cx="206.700" cy="308.800" r="1.900" fill="#40200f"/>
<path d="M189.500 308.800l16-11.600c.4-.3 1-.3 1.400 0l16.200 11c.8.600.6 1.700-.2 2.100l-1.200.6c-.5.200-1 .2-1.400-.1l-14.100-9.500-14 10c-.4.300-1 .3-1.500 0l-1-.6c-.8-.5-.9-1.400-.2-1.900z" fill="#e2705a" stroke="#40200f" stroke-width="1.100"/>
<!-- paw -->
<path d="M183.500 311.500c2.500-1.500 6.500-.8 8.500 1.500c1.300 1.500 1.700 3.200 1.700 5" fill="#fffaf4" stroke="#40200f" stroke-width="1.400"/>
<path d="M189.800 330.800l4-.1" stroke="#40200f" stroke-width="1.400"/>
</g></svg>
<svg class="abs" style="left:0px;top:0px" width="768" height="570" viewBox="0 0 768 570"><g stroke-linejoin="round" stroke-linecap="round"><path d="M187.500 336.900c10 1 25-.3 33-3.500c1.300-1.300.2-3-1.500-3l-21 1.300c-4 .3-8 2-10.500 5.200z" fill="#f7a93b" stroke="#40200f" stroke-width="1.100"/>
<path d="M198.500 332.300l-.7 4.300M204.500 331.800l-.4 4.600M210.500 331.300l0 4.300M215.500 330.900l.4 3.600" stroke="#fbd58a" stroke-width="1.400"/></g></svg>
<div class="abs" style="left:127px;top:367px;width:519px;height:16px;background:#6f6f6f"></div>
<div class="abs" style="left:127px;top:367px;width:519px;height:1px;background:#484848"></div>
<div class="abs" style="left:127px;top:382px;width:519px;height:1px;background:#484848"></div>
<div class="abs" style="left:127px;top:489px;width:519px;height:1px;background:#484848"></div>
<div class="abs" style="left:127px;top:367px;width:1px;height:123px;background:#484848"></div>
<div class="abs" style="left:231px;top:367px;width:1px;height:123px;background:#484848"></div>
<div class="abs" style="left:334px;top:367px;width:1px;height:123px;background:#484848"></div>
<div class="abs" style="left:437px;top:367px;width:1px;height:123px;background:#484848"></div>
<div class="abs" style="left:541px;top:367px;width:1px;height:123px;background:#484848"></div>
<div class="abs" style="left:645px;top:367px;width:1px;height:123px;background:#484848"></div>
<span class="tx" style="left:127.00px;top:492.13px;font-size:10px;line-height:12.00px;color:#222;font-weight:bold;transform:scaleX(1.1687);">¶</span>
<span class="tx" style="left:134.00px;top:370.06px;font-size:10.3px;line-height:12.36px;color:#fff;transform:scaleX(1.0108);">Sale·Date</span>
<svg class="abs" style="left:0px;top:0px" width="768" height="570" viewBox="0 0 768 570"><rect x="181.80" y="374.30" width="3.4" height="3.4" rx="0.900" fill="none" stroke="#fff" stroke-width="1"/><path d="M180.65 373.15l1.500 1.500M186.35 373.15l-1.500 1.500M180.65 378.85l1.500-1.500M186.35 378.85l-1.500-1.500" stroke="#fff" stroke-width="0.950"/></svg>
<span class="tx" style="left:237.30px;top:370.06px;font-size:10.3px;line-height:12.36px;color:#fff;transform:scaleX(1.0373);">City</span>
<svg class="abs" style="left:0px;top:0px" width="768" height="570" viewBox="0 0 768 570"><rect x="257.20" y="374.30" width="3.4" height="3.4" rx="0.900" fill="none" stroke="#fff" stroke-width="1"/><path d="M256.05 373.15l1.500 1.500M261.75 373.15l-1.500 1.500M256.05 378.85l1.500-1.500M261.75 378.85l-1.500-1.500" stroke="#fff" stroke-width="0.950"/></svg>
<span class="tx" style="left:341.00px;top:370.06px;font-size:10.3px;line-height:12.36px;color:#fff;transform:scaleX(1.0523);">Units·Sold</span>
<svg class="abs" style="left:0px;top:0px" width="768" height="570" viewBox="0 0 768 570"><rect x="392.50" y="374.30" width="3.4" height="3.4" rx="0.900" fill="none" stroke="#fff" stroke-width="1"/><path d="M391.35 373.15l1.500 1.500M397.05 373.15l-1.500 1.500M391.35 378.85l1.500-1.500M397.05 378.85l-1.500-1.500" stroke="#fff" stroke-width="0.950"/></svg>
<span class="tx" style="left:444.40px;top:370.06px;font-size:10.3px;line-height:12.36px;color:#fff;transform:scaleX(1.0284);">Total·Sales</span>
<svg class="abs" style="left:0px;top:0px" width="768" height="570" viewBox="0 0 768 570"><rect x="498.30" y="374.30" width="3.4" height="3.4" rx="0.900" fill="none" stroke="#fff" stroke-width="1"/><path d="M497.15 373.15l1.500 1.500M502.85 373.15l-1.500 1.500M497.15 378.85l1.500-1.500M502.85 378.85l-1.500-1.500" stroke="#fff" stroke-width="0.950"/></svg>
<span class="tx" style="left:547.70px;top:370.06px;font-size:10.3px;line-height:12.36px;color:#fff;transform:scaleX(1.0082);">Avg·Sell·Price</span>
<svg class="abs" style="left:0px;top:0px" width="768" height="570" viewBox="0 0 768 570"><rect x="614.80" y="374.30" width="3.4" height="3.4" rx="0.900" fill="none" stroke="#fff" stroke-width="1"/><path d="M613.65 373.15l1.500 1.500M619.35 373.15l-1.500 1.500M613.65 378.85l1.500-1.500M619.35 378.85l-1.500-1.500" stroke="#fff" stroke-width="0.950"/></svg>
<svg class="abs" style="left:0px;top:0px" width="768" height="570" viewBox="0 0 768 570"><rect x="647.55" y="374.10" width="3.4" height="3.4" rx="0.900" fill="none" stroke="#222" stroke-width="1"/><path d="M646.40 372.95l1.500 1.500M652.10 372.95l-1.500 1.500M646.40 378.65l1.500-1.500M652.10 378.65l-1.500-1.500" stroke="#222" stroke-width="0.950"/></svg>
<svg class="abs" style="left:0px;top:0px" width="768" height="570" viewBox="0 0 768 570"><rect x="647.55" y="389.80" width="3.4" height="3.4" rx="0.900" fill="none" stroke="#222" stroke-width="1"/><path d="M646.40 388.65l1.500 1.500M652.10 388.65l-1.500 1.500M646.40 394.35l1.500-1.500M652.10 394.35l-1.500-1.500" stroke="#222" stroke-width="0.950"/></svg>
<svg class="abs" style="left:134px;top:388px" width="59" height="14.5" viewBox="0 0 59 14.5"><path d="M4 0.500H58.5C55.5 4.3 55.5 10.1 58.5 14.0H4C2 14.0 0.500 10.1 0.500 7.2C0.500 4.3 2 0.500 4 0.500z" fill="#fff" stroke="#b7c6d8" stroke-width="0.900"/><path d="M5.500 6.0l-1.300 1.300 1.300 1.300M7.300 6.0l-1.300 1.300 1.300 1.300" fill="none" stroke="#a9c3df" stroke-width="0.600"/></svg>
<span class="tx" style="left:143.80px;top:390.17px;font-size:9px;line-height:10.80px;color:#1c1c1c;transform:scaleX(0.9716);">Table Rows</span>
<svg class="abs" style="left:194.4px;top:388px" width="19.0" height="14.5" viewBox="0 0 19.0 14.5"><path d="M4 0.500H18.5C15.5 4.3 15.5 10.1 18.5 14.0H4C2 14.0 0.500 10.1 0.500 7.2C0.500 4.3 2 0.500 4 0.500z" fill="#fff" stroke="#b7c6d8" stroke-width="0.900"/><path d="M5.500 6.0l-1.300 1.300 1.300 1.300M7.300 6.0l-1.300 1.300 1.300 1.300" fill="none" stroke="#a9c3df" stroke-width="0.600"/></svg>
<svg class="abs" style="left:134px;top:409px" width="51.80000000000001" height="14.5" viewBox="0 0 51.80000000000001 14.5"><path d="M4 0.500H51.3C48.3 4.3 48.3 10.1 51.3 14.0H4C2 14.0 0.500 10.1 0.500 7.2C0.500 4.3 2 0.500 4 0.500z" fill="#fff" stroke="#b7c6d8" stroke-width="0.900"/><path d="M5.500 6.0l-1.300 1.300 1.300 1.300M7.300 6.0l-1.300 1.300 1.300 1.300" fill="none" stroke="#a9c3df" stroke-width="0.600"/></svg>
<span class="tx" style="left:143.00px;top:411.17px;font-size:9px;line-height:10.80px;color:#1c1c1c;transform:scaleX(0.9715);">Sale Date</span>
<span class="tx" style="left:186.50px;top:409.90px;font-size:11.6px;line-height:13.92px;color:#898989;transform:scaleX(0.8778);">Click·or·</span>
<span class="tx" style="left:134.00px;top:425.60px;font-size:11.6px;line-height:13.92px;color:#898989;transform:scaleX(0.9570);">tap·here·to·enter·</span>
<span class="tx" style="left:134.00px;top:445.40px;font-size:11.6px;line-height:13.92px;color:#898989;transform:scaleX(1.0219);">text.</span>
<svg class="abs" style="left:157.3px;top:444px" width="51.19999999999999" height="14.5" viewBox="0 0 51.19999999999999 14.5"><path d="M0.500 0.500H47.2C49.2 0.500 50.7 4.3 50.7 7.2C50.7 10.1 49.2 14.0 47.2 14.0H0.500C3.500 10.1 3.500 4.3 0.500 0.500z" fill="#fff" stroke="#b7c6d8" stroke-width="0.900"/><path d="M43.9 6.0l1.300 1.300-1.300 1.300M45.7 6.0l1.300 1.300-1.300 1.300" fill="none" stroke="#a9c3df" stroke-width="0.600"/></svg>
<span class="tx" style="left:162.00px;top:446.17px;font-size:9px;line-height:10.80px;color:#1c1c1c;transform:scaleX(0.9614);">Sale Date</span>
<svg class="abs" style="left:0px;top:0px" width="768" height="570" viewBox="0 0 768 570"><rect x="210.10" y="451.80" width="3.4" height="3.4" rx="0.900" fill="none" stroke="#222" stroke-width="1"/><path d="M208.95 450.65l1.500 1.500M214.65 450.65l-1.500 1.500M208.95 456.35l1.500-1.500M214.65 456.35l-1.500-1.500" stroke="#222" stroke-width="0.950"/></svg>
<svg class="abs" style="left:238px;top:388.5px" width="28" height="14.5" viewBox="0 0 28 14.5"><path d="M4 0.500H27.5C24.5 4.3 24.5 10.1 27.5 14.0H4C2 14.0 0.500 10.1 0.500 7.2C0.500 4.3 2 0.500 4 0.500z" fill="#fff" stroke="#b7c6d8" stroke-width="0.900"/><path d="M5.500 6.0l-1.300 1.300 1.300 1.300M7.300 6.0l-1.300 1.300 1.300 1.300" fill="none" stroke="#a9c3df" stroke-width="0.600"/></svg>
<span class="tx" style="left:247.00px;top:390.67px;font-size:9px;line-height:10.80px;color:#1c1c1c;transform:scaleX(0.9291);">City</span>
<span class="tx" style="left:267.00px;top:389.10px;font-size:11.6px;line-height:13.92px;color:#898989;transform:scaleX(0.9135);">Click·or·tap·</span>
<span class="tx" style="left:237.60px;top:404.60px;font-size:11.6px;line-height:13.92px;color:#898989;transform:scaleX(0.9616);">here·to·enter·</span>
<span class="tx" style="left:237.60px;top:424.00px;font-size:11.6px;line-height:13.92px;color:#898989;transform:scaleX(0.9945);">text.</span>
<svg class="abs" style="left:260.8px;top:423.5px" width="27.80000000000001" height="14.5" viewBox="0 0 27.80000000000001 14.5"><path d="M0.500 0.500H23.8C25.8 0.500 27.3 4.3 27.3 7.2C27.3 10.1 25.8 14.0 23.8 14.0H0.500C3.500 10.1 3.500 4.3 0.500 0.500z" fill="#fff" stroke="#b7c6d8" stroke-width="0.900"/><path d="M20.5 6.0l1.300 1.300-1.300 1.300M22.3 6.0l1.300 1.300-1.300 1.300" fill="none" stroke="#a9c3df" stroke-width="0.600"/></svg>
<span class="tx" style="left:266.00px;top:425.67px;font-size:9px;line-height:10.80px;color:#1c1c1c;transform:scaleX(0.9032);">City</span>
<svg class="abs" style="left:0px;top:0px" width="768" height="570" viewBox="0 0 768 570"><rect x="291.05" y="430.30" width="3.4" height="3.4" rx="0.900" fill="none" stroke="#222" stroke-width="1"/><path d="M289.90 429.15l1.500 1.500M295.60 429.15l-1.500 1.500M289.90 434.85l1.500-1.500M295.60 434.85l-1.500-1.500" stroke="#222" stroke-width="0.950"/></svg>
<svg class="abs" style="left:341.6px;top:388.5px" width="52.39999999999998" height="14.5" viewBox="0 0 52.39999999999998 14.5"><path d="M4 0.500H51.9C48.9 4.3 48.9 10.1 51.9 14.0H4C2 14.0 0.500 10.1 0.500 7.2C0.500 4.3 2 0.500 4 0.500z" fill="#fff" stroke="#b7c6d8" stroke-width="0.900"/><path d="M5.500 6.0l-1.300 1.300 1.300 1.300M7.300 6.0l-1.300 1.300 1.300 1.300" fill="none" stroke="#a9c3df" stroke-width="0.600"/></svg>
<span class="tx" style="left:350.50px;top:390.67px;font-size:9px;line-height:10.80px;color:#1c1c1c;transform:scaleX(0.9776);">Units Sold</span>
<span class="tx" style="left:395.50px;top:389.10px;font-size:11.6px;line-height:13.92px;color:#898989;transform:scaleX(0.8917);">Click·or·</span>
<span class="tx" style="left:341.00px;top:404.60px;font-size:11.6px;line-height:13.92px;color:#898989;transform:scaleX(0.9680);">tap·here·to·enter·</span>
<span class="tx" style="left:341.00px;top:424.00px;font-size:11.6px;line-height:13.92px;color:#898989;transform:scaleX(1.0037);">text.</span>
<svg class="abs" style="left:364.8px;top:423.5px" width="51.599999999999966" height="14.5" viewBox="0 0 51.599999999999966 14.5"><path d="M0.500 0.500H47.6C49.6 0.500 51.1 4.3 51.1 7.2C51.1 10.1 49.6 14.0 47.6 14.0H0.500C3.500 10.1 3.500 4.3 0.500 0.500z" fill="#fff" stroke="#b7c6d8" stroke-width="0.900"/><path d="M44.3 6.0l1.300 1.300-1.300 1.300M46.1 6.0l1.300 1.300-1.300 1.300" fill="none" stroke="#a9c3df" stroke-width="0.600"/></svg>
<span class="tx" style="left:369.70px;top:425.67px;font-size:9px;line-height:10.80px;color:#1c1c1c;transform:scaleX(0.9581);">Units Sold</span>
<svg class="abs" style="left:0px;top:0px" width="768" height="570" viewBox="0 0 768 570"><rect x="419.30" y="430.30" width="3.4" height="3.4" rx="0.900" fill="none" stroke="#222" stroke-width="1"/><path d="M418.15 429.15l1.500 1.500M423.85 429.15l-1.500 1.500M418.15 434.85l1.500-1.500M423.85 434.85l-1.500-1.500" stroke="#222" stroke-width="0.950"/></svg>
<svg class="abs" style="left:445px;top:388.5px" width="56.30000000000001" height="14.0" viewBox="0 0 56.30000000000001 14.0"><path d="M4 0.500H55.8C52.8 4.2 52.8 9.8 55.8 13.5H4C2 13.5 0.500 9.8 0.500 7.0C0.500 4.2 2 0.500 4 0.500z" fill="#fff" stroke="#b7c6d8" stroke-width="0.900"/><path d="M5.500 5.7l-1.300 1.300 1.300 1.300M7.300 5.7l-1.300 1.300 1.300 1.300" fill="none" stroke="#a9c3df" stroke-width="0.600"/></svg>
<span class="tx" style="left:454.60px;top:390.42px;font-size:9px;line-height:10.80px;color:#1c1c1c;transform:scaleX(0.9517);">Total Sales</span>
<span class="tx" style="left:502.00px;top:388.90px;font-size:11.6px;line-height:13.92px;color:#898989;transform:scaleX(0.8726);">Click·</span>
<span class="tx" style="left:444.70px;top:404.80px;font-size:11.6px;line-height:13.92px;color:#898989;transform:scaleX(0.9454);">or·tap·here·to·</span>
<span class="tx" style="left:444.70px;top:419.20px;font-size:11.6px;line-height:13.92px;color:#898989;transform:scaleX(0.9768);">enter·</span>
<span class="tx" style="left:444.70px;top:439.90px;font-size:11.6px;line-height:13.92px;color:#898989;transform:scaleX(0.9717);">text.</span>
<svg class="abs" style="left:468px;top:439.4px" width="55.700000000000045" height="14.100000000000023" viewBox="0 0 55.700000000000045 14.100000000000023"><path d="M0.500 0.500H51.7C53.7 0.500 55.2 4.2 55.2 7.1C55.2 9.9 53.7 13.6 51.7 13.6H0.500C3.500 9.9 3.500 4.2 0.500 0.500z" fill="#fff" stroke="#b7c6d8" stroke-width="0.900"/><path d="M48.4 5.8l1.300 1.300-1.300 1.300M50.2 5.8l1.300 1.300-1.300 1.300" fill="none" stroke="#a9c3df" stroke-width="0.600"/></svg>
<span class="tx" style="left:473.40px;top:441.37px;font-size:9px;line-height:10.80px;color:#1c1c1c;transform:scaleX(0.9676);">Total Sales</span>
<svg class="abs" style="left:0px;top:0px" width="768" height="570" viewBox="0 0 768 570"><rect x="526.30" y="445.80" width="3.4" height="3.4" rx="0.900" fill="none" stroke="#222" stroke-width="1"/><path d="M525.15 444.65l1.500 1.500M530.85 444.65l-1.500 1.500M525.15 450.35l1.500-1.500M530.85 450.35l-1.500-1.500" stroke="#222" stroke-width="0.950"/></svg>
<svg class="abs" style="left:549px;top:388.5px" width="95" height="14.0" viewBox="0 0 95 14.0"><path d="M4 0.500H94.5C91.5 4.2 91.5 9.8 94.5 13.5H4C2 13.5 0.500 9.8 0.500 7.0C0.500 4.2 2 0.500 4 0.500z" fill="#fff" stroke="#b7c6d8" stroke-width="0.900"/><path d="M5.500 5.7l-1.300 1.300 1.300 1.300M7.300 5.7l-1.300 1.300 1.300 1.300" fill="none" stroke="#a9c3df" stroke-width="0.600"/></svg>
<span class="tx" style="left:557.30px;top:390.42px;font-size:9px;line-height:10.80px;color:#1c1c1c;transform:scaleX(0.9582);">Average Selling Price</span>
<span class="tx" style="left:548.00px;top:404.80px;font-size:11.6px;line-height:13.92px;color:#898989;transform:scaleX(0.8976);">Click·or·tap·here·</span>
<span class="tx" style="left:548.00px;top:419.20px;font-size:11.6px;line-height:13.92px;color:#898989;transform:scaleX(0.9808);">to·enter·</span>
<span class="tx" style="left:548.00px;top:433.90px;font-size:11.6px;line-height:13.92px;color:#898989;transform:scaleX(0.9581);">text.</span>
<svg class="abs" style="left:548px;top:453.4px" width="95" height="14.0" viewBox="0 0 95 14.0"><path d="M0.500 0.500H91.0C93.0 0.500 94.5 4.2 94.5 7.0C94.5 9.8 93.0 13.5 91.0 13.5H0.500C3.500 9.8 3.500 4.2 0.500 0.500z" fill="#fff" stroke="#b7c6d8" stroke-width="0.900"/><path d="M87.7 5.7l1.300 1.300-1.300 1.300M89.5 5.7l1.300 1.300-1.300 1.300" fill="none" stroke="#a9c3df" stroke-width="0.600"/></svg>
<span class="tx" style="left:552.80px;top:455.32px;font-size:9px;line-height:10.80px;color:#1c1c1c;transform:scaleX(0.9571);">Average Selling Price</span>
<svg class="abs" style="left:549px;top:474.4px" width="18.799999999999955" height="13.900000000000034" viewBox="0 0 18.799999999999955 13.900000000000034"><path d="M0.500 0.500H14.8C16.8 0.500 18.3 4.2 18.3 7.0C18.3 9.7 16.8 13.4 14.8 13.4H0.500C3.500 9.7 3.500 4.2 0.500 0.500z" fill="#fff" stroke="#b7c6d8" stroke-width="0.900"/><path d="M11.5 5.7l1.300 1.300-1.300 1.300M13.3 5.7l1.300 1.300-1.300 1.300" fill="none" stroke="#a9c3df" stroke-width="0.600"/></svg>
<svg class="abs" style="left:569px;top:474.4px" width="58.700000000000045" height="13.900000000000034" viewBox="0 0 58.700000000000045 13.900000000000034"><path d="M0.500 0.500H54.7C56.7 0.500 58.2 4.2 58.2 7.0C58.2 9.7 56.7 13.4 54.7 13.4H0.500C3.500 9.7 3.500 4.2 0.500 0.500z" fill="#fff" stroke="#b7c6d8" stroke-width="0.900"/><path d="M51.4 5.7l1.300 1.300-1.300 1.300M53.2 5.7l1.300 1.300-1.300 1.300" fill="none" stroke="#a9c3df" stroke-width="0.600"/></svg>
<span class="tx" style="left:574.00px;top:476.27px;font-size:9px;line-height:10.80px;color:#1c1c1c;transform:scaleX(0.9673);">Table Rows</span>
<svg class="abs" style="left:0px;top:0px" width="768" height="570" viewBox="0 0 768 570"><rect x="629.60" y="480.30" width="3.4" height="3.4" rx="0.900" fill="none" stroke="#222" stroke-width="1"/><path d="M628.45 479.15l1.500 1.500M634.15 479.15l-1.500 1.500M628.45 484.85l1.500-1.500M634.15 484.85l-1.500-1.500" stroke="#222" stroke-width="0.950"/></svg>
<div class="abs" style="left:0px;top:552.5px;width:768px;height:17.5px;background:#f3f3f3;border-top:1px solid #d9d9d9"></div>
<span class="tx" style="left:6.00px;top:557.31px;font-size:8px;line-height:9.60px;color:#444;transform:scaleX(0.9530);">Page 1 of 1</span>
<span class="tx" style="left:56.50px;top:557.31px;font-size:8px;line-height:9.60px;color:#444;transform:scaleX(0.9628);">At: 2.6"</span>
<span class="tx" style="left:95.00px;top:557.31px;font-size:8px;line-height:9.60px;color:#444;transform:scaleX(1.0012);">45 words</span>
<svg class="abs" style="left:141px;top:557.5px" width="10" height="9" viewBox="0 0 10 9"><path d="M0.500 0.800c1.500-.5 3-.3 4.300.7c1.300-1 2.800-1.200 4.300-.7v6.500c-1.500-.5-3-.3-4.300.7c-1.300-1-2.800-1.200-4.300-.7z" fill="none" stroke="#555" stroke-width="0.800"/><path d="M4.800 1.500v6.500" stroke="#555" stroke-width="0.800"/></svg>
<svg class="abs" style="left:165px;top:557.5px" width="10" height="9.5" viewBox="0 0 10 9.5"><rect x="0.500" y="0.500" width="8.500" height="7.500" fill="none" stroke="#555" stroke-width="0.800"/><path d="M0.500 2.500h8.500M2 4.300h3" stroke="#555" stroke-width="0.800"/><circle cx="6.500" cy="6.500" r="2.200" fill="#f3f3f3" stroke="#555" stroke-width="0.800"/><circle cx="6.500" cy="6.500" r="0.800" fill="#555"/></svg>
<svg class="abs" style="left:187.5px;top:557px" width="10" height="10" viewBox="0 0 10 10"><circle cx="4" cy="1.500" r="1" fill="none" stroke="#555" stroke-width="0.800"/><path d="M0.800 3.300l3.200.9 3.200-.9M4 4.200v2l-2 3M4 6.200l1.200 1.500" fill="none" stroke="#555" stroke-width="0.800"/><path d="M6 7l3 3M9 7l-3 3" stroke="#555" stroke-width="0.800"/></svg>
<span class="tx" style="left:199.50px;top:557.31px;font-size:8px;line-height:9.60px;color:#444;transform:scaleX(0.9861);">Accessibility: Investigate</span>
<svg class="abs" style="left:510.5px;top:557px" width="10" height="10" viewBox="0 0 10 10"><path d="M0.500 2.500v-2h2M7.500 0.500h2v2M0.500 7.500v2h2M9.500 7.500v2h-2" fill="none" stroke="#555" stroke-width="0.800"/><path d="M3 2.500h2.800l1.200 1.200v3.800h-4z" fill="none" stroke="#555" stroke-width="0.800"/></svg>
<span class="tx" style="left:523.00px;top:557.31px;font-size:8px;line-height:9.60px;color:#444;transform:scaleX(0.9180);">Focus</span>
<svg class="abs" style="left:560px;top:557.5px" width="11" height="9" viewBox="0 0 11 9"><path d="M0.500 0.500h4.500v7.500h-4.500zM5.700 0.500h4.500v7.500h-4.500z" fill="none" stroke="#555" stroke-width="0.800"/><path d="M1.500 2.500h2.500M1.500 4.200h2.500M1.500 5.900h2.500M6.700 2.500h2.500M6.700 4.200h2.500M6.700 5.900h2.500" stroke="#777" stroke-width="0.600"/></svg>
<div class="abs" style="left:583px;top:553.5px;width:20px;height:16.5px;background:#d6d6d6"></div>
<svg class="abs" style="left:589px;top:557px" width="8" height="10" viewBox="0 0 8 10"><rect x="0.500" y="0.500" width="7" height="9" fill="#f6f6f6" stroke="#555" stroke-width="0.800"/><path d="M2 2.500h4M2 4.300h4M2 6.100h4M2 7.800h2.500" stroke="#666" stroke-width="0.700"/></svg>
<svg class="abs" style="left:616px;top:557px" width="11" height="10" viewBox="0 0 11 10"><rect x="0.500" y="0.500" width="8" height="8" fill="none" stroke="#555" stroke-width="0.800"/><path d="M0.500 2.500h8M2 4.300h3M2 6h2" stroke="#666" stroke-width="0.700"/><circle cx="7.500" cy="7" r="2.600" fill="#555"/></svg>
<div class="abs" style="left:639px;top:561.5px;width:5.5px;height:1.0px;background:#555"></div>
<div class="abs" style="left:648px;top:561.5px;width:70px;height:0.7999999999999545px;background:#8a8a8a"></div>
<div class="abs" style="left:683px;top:557px;width:3px;height:10px;background:#555"></div>
<div class="abs" style="left:720.5px;top:561.5px;width:5.5px;height:1.0px;background:#555"></div>
<div class="abs" style="left:722.8px;top:559.3px;width:0.900000000000091px;height:5.5px;background:#555"></div>
<span class="tx" style="left:735.50px;top:557.31px;font-size:8px;line-height:9.60px;color:#444;transform:scaleX(0.9530);">120%</span>
</body></html>
